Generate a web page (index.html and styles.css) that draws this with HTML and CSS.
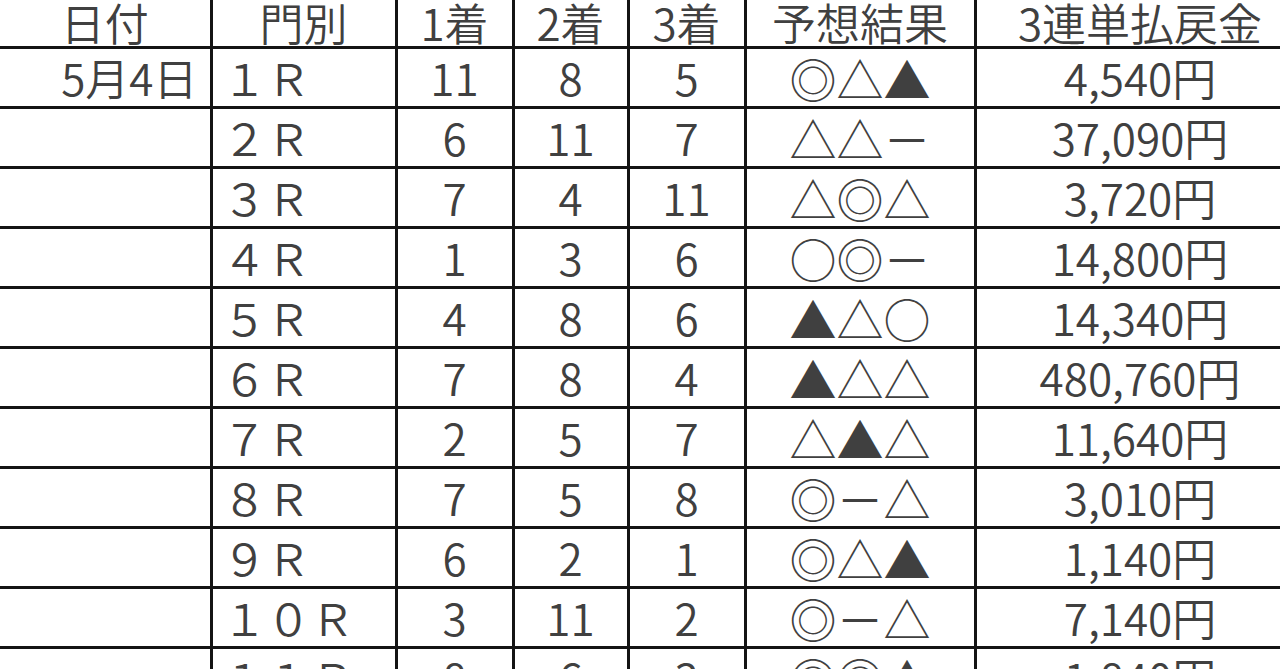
FILE: index.html
```html
<!DOCTYPE html>
<html lang="ja">
<head>
<meta charset="utf-8">
<title>予想結果</title>
<link rel="stylesheet" href="styles.css">
</head>
<body>
<table class="results">
  <colgroup>
    <col class="c-date"><col class="c-race"><col class="c-num"><col class="c-num2"><col class="c-num"><col class="c-mark"><col class="c-pay">
  </colgroup>
  <thead>
    <tr class="head">
      <th>日付</th><th>門別</th><th>1着</th><th>2着</th><th>3着</th><th>予想結果</th><th>3連単払戻金</th>
    </tr>
  </thead>
  <tbody>
    <tr><td class="date">5月4日</td><td class="race">１Ｒ</td><td>11</td><td>8</td><td>5</td><td class="mark">◎△▲</td><td>4,540円</td></tr>
    <tr><td class="date"></td><td class="race">２Ｒ</td><td>6</td><td>11</td><td>7</td><td class="mark">△△－</td><td>37,090円</td></tr>
    <tr><td class="date"></td><td class="race">３Ｒ</td><td>7</td><td>4</td><td>11</td><td class="mark">△◎△</td><td>3,720円</td></tr>
    <tr><td class="date"></td><td class="race">４Ｒ</td><td>1</td><td>3</td><td>6</td><td class="mark">○◎－</td><td>14,800円</td></tr>
    <tr><td class="date"></td><td class="race">５Ｒ</td><td>4</td><td>8</td><td>6</td><td class="mark">▲△○</td><td>14,340円</td></tr>
    <tr><td class="date"></td><td class="race">６Ｒ</td><td>7</td><td>8</td><td>4</td><td class="mark">▲△△</td><td>480,760円</td></tr>
    <tr><td class="date"></td><td class="race">７Ｒ</td><td>2</td><td>5</td><td>7</td><td class="mark">△▲△</td><td>11,640円</td></tr>
    <tr><td class="date"></td><td class="race">８Ｒ</td><td>7</td><td>5</td><td>8</td><td class="mark">◎－△</td><td>3,010円</td></tr>
    <tr><td class="date"></td><td class="race">９Ｒ</td><td>6</td><td>2</td><td>1</td><td class="mark">◎△▲</td><td>1,140円</td></tr>
    <tr><td class="date"></td><td class="race">１０Ｒ</td><td>3</td><td>11</td><td>2</td><td class="mark">◎－△</td><td>7,140円</td></tr>
    <tr><td class="date"></td><td class="race">１１Ｒ</td><td>8</td><td>6</td><td>3</td><td class="mark">◎◎▲</td><td>1,840円</td></tr>
  </tbody>
</table>
</body>
</html>
```
FILE: styles.css
```css
html, body {
  margin: 0;
  padding: 0;
  background: #ffffff;
  overflow: hidden;
}
body {
  width: 1280px;
  height: 669px;
}
.results {
  border-collapse: collapse;
  table-layout: fixed;
  width: 1305px;
  font-family: "Noto Sans CJK JP", "Noto Sans", sans-serif;
  font-size: 44px;
  font-weight: 350;
  color: #404040;
}
.c-date { width: 211px; }
.c-race { width: 185px; }
.c-num { width: 117px; }
.c-num2 { width: 115px; }
.c-mark { width: 230px; }
.c-pay { width: 330px; }

.results th,
.results td {
  border: 3px solid #141414;
  padding: 0;
  text-align: center;
  vertical-align: middle;
  font-weight: 350;
  line-height: 1;
  white-space: nowrap;
}
.results tr > :first-child { border-left: none; }
.results thead th { border-top: none; }
.head { height: 47px; }
.results th { padding-bottom: 1px; }
.results tbody tr { height: 60px; }
.results td.date {
  text-align: right;
  padding-right: 12px;
}
.results td.race {
  text-align: left;
  padding-left: 10px;
}
.results td.mark {
  font-size: 47px;
}
```
